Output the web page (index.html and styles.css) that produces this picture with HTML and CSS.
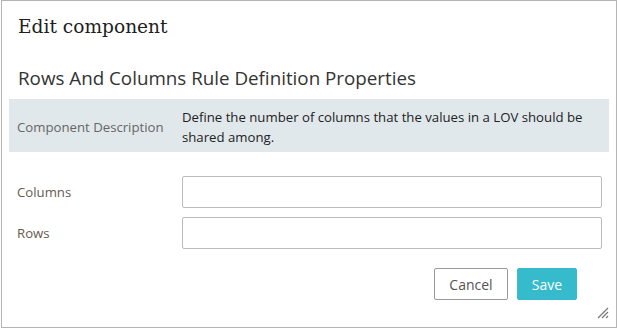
FILE: index.html
```html
<!DOCTYPE html>
<html>
<head>
<meta charset="utf-8">
<link rel="stylesheet" href="styles.css">
</head>
<body>
<div class="dialog">
  <div class="title">Edit component</div>
  <div class="subtitle">Rows And Columns Rule Definition Properties</div>
  <div class="band">
    <div class="band-label">Component Description</div>
    <div class="band-text">Define the number of columns that the values in a LOV should be shared among.</div>
  </div>
  <div class="form">
    <div class="row">
      <label class="row-label">Columns</label>
      <input class="field" type="text">
    </div>
    <div class="row">
      <label class="row-label">Rows</label>
      <input class="field" type="text">
    </div>
  </div>
  <div class="actions">
    <button class="btn btn-cancel">Cancel</button>
    <button class="btn btn-save">Save</button>
  </div>
  <svg class="grip" width="12" height="12" viewBox="0 0 12 12">
    <path d="M11 1 L1 11 M11 5 L5 11 M11 9 L9 11" stroke="#777" stroke-width="1.2" fill="none"/>
  </svg>
</div>
</body>
</html>
```

FILE: styles.css
```css
html, body {
  margin: 0;
  padding: 0;
  background: #fff;
}
.dialog {
  position: relative;
  box-sizing: border-box;
  margin-left: 1px;
  width: 616px;
  height: 328px;
  border: 1px solid #b4b4b4;
  background: #fff;
  font-family: "Open Sans", "Noto Sans", sans-serif;
  color: #333;
}
.title {
  font-family: "DejaVu Serif", serif;
  font-size: 18.6px;
  line-height: 26px;
  color: #1e1e1e;
  padding: 13px 0 0 16px;
  height: 52px;
}
.subtitle {
  font-size: 18.8px;
  line-height: 24px;
  color: #333;
  padding-left: 16px;
  height: 24px;
}
.band {
  margin: 9px 0 0 7px;
  width: 600px;
  height: 53px;
  box-sizing: border-box;
  background: #e1e8eb;
  display: grid;
  grid-template-columns: 173px 1fr;
  align-items: center;
  padding: 3px 0 0 0;
}
.band-label {
  padding-left: 8px;
  font-size: 13.2px;
  color: #666;
}
.band-text {
  font-size: 13.2px;
  line-height: 20px;
  color: #222;
  padding-right: 10px;
}
.form {
  margin-top: 24px;
  display: flex;
  flex-direction: column;
  gap: 9px;
}
.row {
  display: grid;
  grid-template-columns: 180px 420px;
  align-items: center;
}
.row-label {
  padding-left: 15px;
  font-size: 13.2px;
  color: #665a50;
}
.field {
  box-sizing: border-box;
  width: 420px;
  height: 32px;
  margin: 0;
  border: 1px solid #bbb;
  border-radius: 2px;
  background: #fff;
  font-family: inherit;
}
.actions {
  margin-top: 19px;
  display: flex;
  justify-content: flex-end;
  gap: 9px;
  padding-right: 39px;
}
.btn {
  box-sizing: border-box;
  height: 32px;
  font-family: inherit;
  font-size: 14px;
  border-radius: 2px;
  margin: 0;
  cursor: pointer;
}
.btn-cancel {
  width: 74px;
  background: #fff;
  border: 1px solid #999;
  color: #555;
}
.btn-save {
  width: 60px;
  background: #35bbcb;
  border: 1px solid #35bbcb;
  color: #fff;
}
.grip {
  position: absolute;
  right: 7px;
  bottom: 8px;
}
```
